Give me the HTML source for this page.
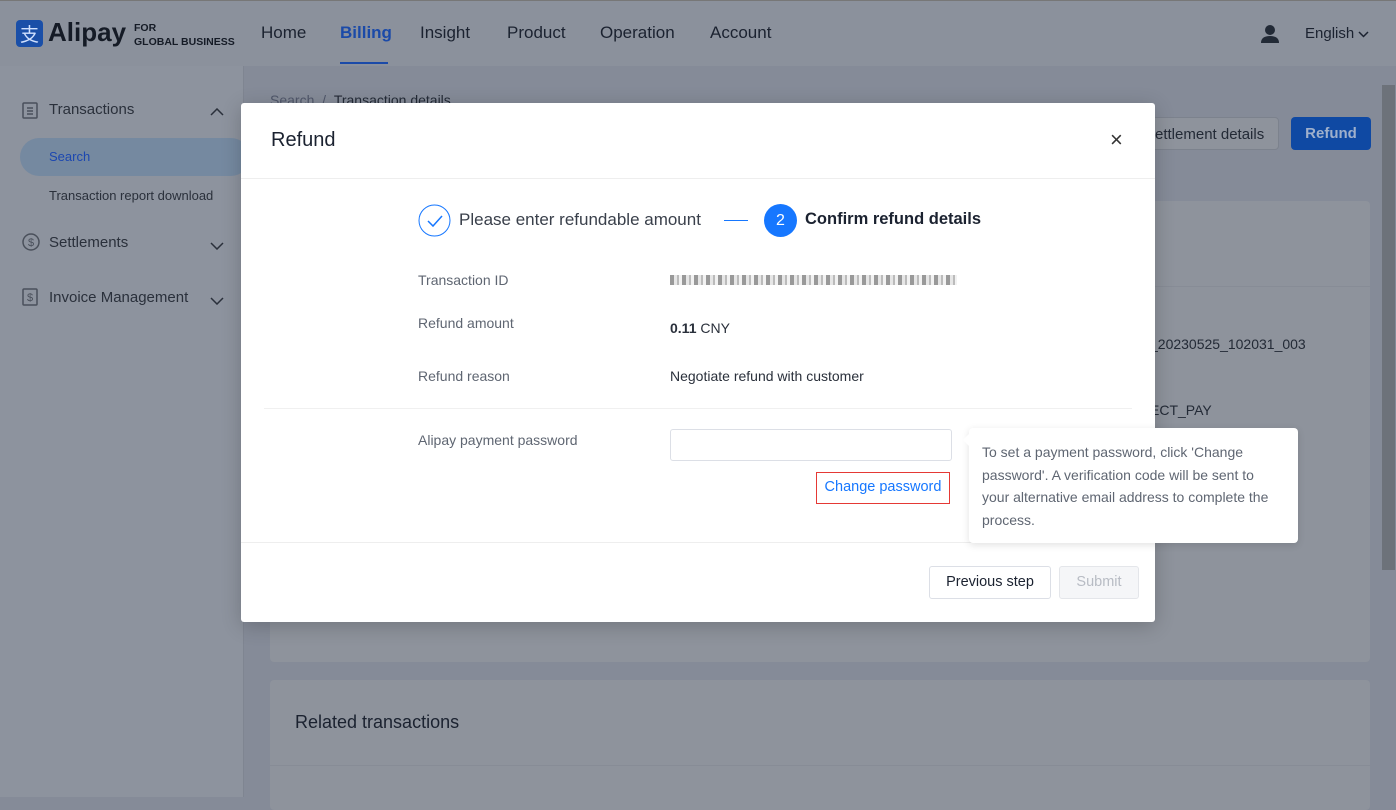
<!DOCTYPE html>
<html><head><meta charset="utf-8"><style>
*{box-sizing:border-box;margin:0;padding:0}
body{width:1396px;height:797px;overflow:hidden;position:relative;font-family:"Liberation Sans",sans-serif;background:#858b98;color:#1f2633}
.hdr{position:absolute;left:0;top:0;width:1396px;height:66px;background:#8b919c;border-top:1px solid #777}
.nav{position:absolute;top:22px;font-size:17px;color:#1b2230}
.side{position:absolute;left:0;top:66px;width:244px;height:731px;background:#8d939e;border-right:1px solid #7f8591}
.si{position:absolute;left:49px;font-size:15px;color:#2a303b}
.card{position:absolute;background:#8e939c;border-radius:4px}
.modal{position:absolute;left:241px;top:103px;width:914px;height:519px;background:#fff;border-radius:3px;box-shadow:0 4px 20px rgba(0,0,0,.2)}
.lbl{position:absolute;left:177px;font-size:14px;color:#5f6672}
.val{position:absolute;left:429px;font-size:14px;color:#2a303b}
.chev{position:absolute;left:210px}
</style></head><body>
<div class="hdr">
 <svg style="position:absolute;left:16px;top:19px" width="27" height="27"><rect width="27" height="27" rx="4" fill="#1a4fa8"/><text x="13.5" y="21" font-size="19" fill="#cfe0ff" text-anchor="middle" font-family="Noto Sans CJK SC">支</text></svg>
 <div style="position:absolute;left:48px;top:16px;font-size:26px;font-weight:bold;color:#151b26">Alipay</div>
 <div style="position:absolute;left:134px;top:20px;font-size:10.5px;line-height:14px;color:#151b26;font-weight:bold">FOR<br>GLOBAL BUSINESS</div>
 <div class="nav" style="left:261px">Home</div>
 <div class="nav" style="left:340px;color:#1b4aa8;font-weight:bold">Billing</div>
 <div style="position:absolute;left:340px;top:61px;width:48px;height:2px;background:#1b4aa8"></div>
 <div class="nav" style="left:420px">Insight</div>
 <div class="nav" style="left:507px">Product</div>
 <div class="nav" style="left:600px">Operation</div>
 <div class="nav" style="left:710px">Account</div>
 <svg style="position:absolute;left:1260px;top:23px" width="20" height="20"><circle cx="10" cy="6" r="5" fill="#222a36"/><path d="M1 19 Q1 12 10 12 Q19 12 19 19Z" fill="#222a36"/></svg>
 <div style="position:absolute;left:1305px;top:24px;font-size:15px;color:#1b2230">English</div>
 <svg style="position:absolute;left:1358px;top:30px" width="11" height="7"><path d="M1 1l4.5 4.5L10 1" fill="none" stroke="#1b2230" stroke-width="1.5"/></svg>
</div>
<div class="side">
 <div style="position:absolute;left:20px;top:72px;width:230px;height:38px;border-radius:19px;background:#7589a0"></div>
 <div class="si" style="top:35px">Transactions</div>
 <svg class="chev" style="top:42px" width="14" height="8"><path d="M1 7l6-6 6 6" fill="none" stroke="#2a303b" stroke-width="1.5"/></svg>
 <div class="si" style="top:83px;font-size:13px;color:#1c47b0">Search</div>
 <div class="si" style="top:122px;font-size:13px">Transaction report download</div>
 <div class="si" style="top:168px">Settlements</div>
 <svg class="chev" style="top:176px" width="14" height="8"><path d="M1 1l6 6 6-6" fill="none" stroke="#2a303b" stroke-width="1.5"/></svg>
 <div class="si" style="top:223px">Invoice Management</div>
 <svg class="chev" style="top:231px" width="14" height="8"><path d="M1 1l6 6 6-6" fill="none" stroke="#2a303b" stroke-width="1.5"/></svg>
 <svg style="position:absolute;left:22px;top:35px" width="16" height="18" fill="none" stroke="#4a505b" stroke-width="1.5"><rect x="1" y="2" width="14" height="15" rx="1"/><path d="M5 7h6M5 10h6M5 13h6"/></svg>
 <svg style="position:absolute;left:22px;top:167px" width="18" height="18" fill="none" stroke="#4a505b" stroke-width="1.5"><circle cx="9" cy="9" r="8"/><text x="9" y="13" font-size="11" text-anchor="middle" fill="#4a505b" stroke="none">$</text></svg>
 <svg style="position:absolute;left:22px;top:222px" width="16" height="18" fill="none" stroke="#4a505b" stroke-width="1.5"><rect x="1" y="1" width="14" height="16" rx="1"/><text x="8" y="13" font-size="11" text-anchor="middle" fill="#4a505b" stroke="none">$</text></svg>
</div>
<div style="position:absolute;left:270px;top:92px;font-size:14px;color:#50576a">Search &nbsp;/ &nbsp;<span style="color:#232a36">Transaction details</span></div>
<div style="position:absolute;left:1140px;top:117px;width:139px;height:33px;border:1px solid #7c828d;border-radius:4px;background:#8e939c;font-size:15px;padding:8px 0 0 14px;color:#232a36">ettlement details</div>
<div style="position:absolute;left:1291px;top:117px;width:80px;height:33px;border-radius:4px;background:#0f49a3;color:#9fb0cc;font-size:15px;font-weight:bold;text-align:center;line-height:33px">Refund</div>
<div class="card" style="left:270px;top:201px;width:1100px;height:461px"></div>
<div style="position:absolute;left:270px;top:286px;width:1100px;height:1px;background:#878c96"></div>
<div style="position:absolute;left:1150px;top:336px;font-size:14px;color:#232a36">_20230525_102031_003</div>
<div style="position:absolute;left:1150px;top:402px;font-size:14px;color:#232a36">ECT_PAY</div>
<div class="card" style="left:270px;top:680px;width:1100px;height:130px"></div>
<div style="position:absolute;left:295px;top:712px;font-size:18px;color:#1b2230">Related transactions</div>
<div style="position:absolute;left:270px;top:765px;width:1100px;height:1px;background:#878c96"></div>
<div style="position:absolute;left:1380px;top:70px;width:16px;height:727px;background:#858b98"></div>
<div style="position:absolute;left:1382px;top:85px;width:13px;height:485px;background:#6d727a"></div>
<div class="modal">
 <div style="position:absolute;left:30px;top:26px;font-size:20px;color:#1b2230">Refund</div>
 <div style="position:absolute;left:869px;top:24px;font-size:22px;color:#333">×</div>
 <div style="position:absolute;left:0;top:75px;width:914px;height:1px;background:#eee"></div>
 <svg style="position:absolute;left:177px;top:101px" width="33" height="33"><circle cx="16.5" cy="16.5" r="15.5" fill="none" stroke="#1677ff"/><path d="M10 17l5 5 9-10" fill="none" stroke="#1677ff" stroke-width="1.5"/></svg>
 <div style="position:absolute;left:218px;top:107px;font-size:17px;color:#3a404b">Please enter refundable amount</div>
 <div style="position:absolute;left:483px;top:117px;width:24px;height:1px;background:#1677ff"></div>
 <div style="position:absolute;left:523px;top:101px;width:33px;height:33px;border-radius:50%;background:#1677ff;color:#fff;font-size:16px;text-align:center;line-height:33px">2</div>
 <div style="position:absolute;left:564px;top:107px;font-size:16.5px;color:#1b2230;font-weight:bold">Confirm refund details</div>
 <div class="lbl" style="top:169px">Transaction ID</div>
 <div style="position:absolute;left:429px;top:172px;width:287px;height:10px;background:repeating-linear-gradient(90deg,#999 0 4px,#e6e6e6 4px 7px,#bbb 7px 9px,#f2f2f2 9px 12px)"></div>
 <div class="lbl" style="top:212px">Refund amount</div>
 <div class="val" style="top:217px"><b>0.11</b> CNY</div>
 <div class="lbl" style="top:265px">Refund reason</div>
 <div class="val" style="top:265px">Negotiate refund with customer</div>
 <div style="position:absolute;left:23px;top:305px;width:868px;height:1px;background:#f0f0f0"></div>
 <div class="lbl" style="top:329px">Alipay payment password</div>
 <div style="position:absolute;left:429px;top:326px;width:282px;height:32px;border:1px solid #dcdfe6;border-radius:3px"></div>
 <div style="position:absolute;left:575px;top:369px;width:134px;height:32px;border:1.5px solid #e53935;color:#1677ff;font-size:14.5px;text-align:center;line-height:29px">Change password</div>
 <div style="position:absolute;left:0;top:439px;width:914px;height:1px;background:#eee"></div>
 <div style="position:absolute;left:688px;top:463px;width:122px;height:33px;border:1px solid #dcdfe6;border-radius:3px;font-size:14.5px;text-align:center;line-height:31px;color:#1b2230">Previous step</div>
 <div style="position:absolute;left:818px;top:463px;width:80px;height:33px;border:1px solid #e4e6ea;border-radius:3px;background:#f5f6f8;font-size:14.5px;text-align:center;line-height:31px;color:#b8bcc4">Submit</div>
</div>
<div style="position:absolute;left:969px;top:428px;width:329px;height:115px;background:#fff;border-radius:4px;box-shadow:0 2px 8px rgba(0,0,0,.12);padding:13px 13px;font-size:14px;line-height:22.5px;color:#5f6672">To set a payment password, click 'Change password'. A verification code will be sent to your alternative email address to complete the process.</div>
<div style="position:absolute;left:963px;top:434px;width:0;height:0;border-top:6px solid transparent;border-bottom:6px solid transparent;border-right:6px solid #fff"></div>
</body></html>
